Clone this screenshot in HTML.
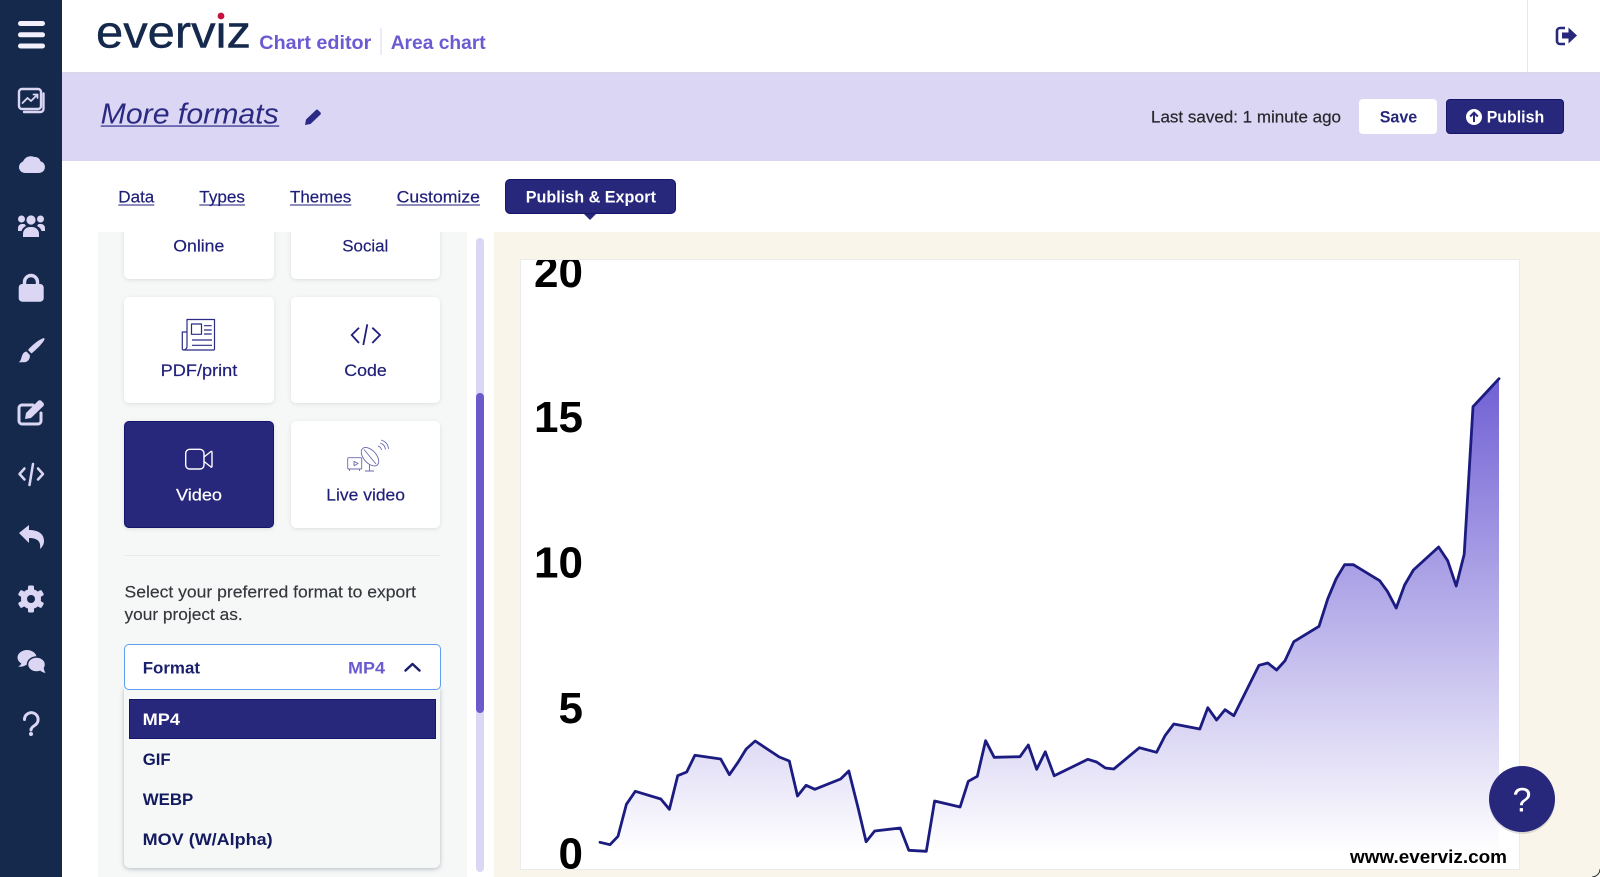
<!DOCTYPE html>
<html lang="en">
<head>
<meta charset="utf-8">
<title>everviz - Chart editor</title>
<style>
html,body{margin:0;padding:0;width:1600px;height:877px;overflow:hidden;background:#fff;font-family:"Liberation Sans",sans-serif}
.b{position:absolute;box-sizing:border-box}
svg.o{position:absolute;left:0;top:0}
text{font-family:"Liberation Sans",sans-serif}
.card{background:#fff;border-radius:5px;box-shadow:0 1px 4px rgba(40,50,70,.13)}
</style>
</head>
<body>
<div class="b" style="left:0;top:0;width:62px;height:877px;background:#15294c"></div>
<div class="b" style="left:62px;top:0;width:1538px;height:73px;background:#fff;border-bottom:1px solid #d9d6e8"></div>
<div class="b" style="left:1527px;top:0;width:1px;height:72px;background:#e6e6e6"></div>
<div class="b" style="left:62px;top:73px;width:1538px;height:88px;background:#dcd6f5"></div>
<div class="b" style="left:1359px;top:99px;width:78px;height:35px;background:#fff;border-radius:4px"></div>
<div class="b" style="left:1446px;top:99px;width:118px;height:35px;background:#27277b;border:1px solid #15156c;border-radius:4px"></div>
<div class="b" style="left:505px;top:179px;width:171px;height:35px;background:#27277b;border:1px solid #15156c;border-radius:5px"></div>
<div class="b" style="left:98px;top:232px;width:369px;height:645px;background:#f6f8f8"></div>
<div class="b card" style="left:124px;top:225px;width:149.500px;height:54px"></div>
<div class="b card" style="left:291px;top:225px;width:149px;height:54px"></div>
<div class="b" style="left:98px;top:161px;width:369px;height:71px;background:#fff"></div>
<div class="b card" style="left:124px;top:297px;width:149.500px;height:106px"></div>
<div class="b card" style="left:291px;top:297px;width:149px;height:106px"></div>
<div class="b card" style="left:124px;top:421px;width:149.500px;height:107px;background:#27277b;border:1px solid #15156c"></div>
<div class="b card" style="left:291px;top:421px;width:149px;height:107px"></div>
<div class="b" style="left:124px;top:555px;width:316px;height:1px;background:#e9ebeb"></div>
<div class="b" style="left:124px;top:688px;width:316px;height:180px;background:#f6f8f8;border-radius:0 0 6px 6px;box-shadow:0 1px 5px rgba(30,40,60,.3)"></div>
<div class="b" style="left:123.500px;top:644px;width:317px;height:46px;background:#fff;border:1.300px solid #5f9ff0;border-radius:5px"></div>
<div class="b" style="left:129px;top:699px;width:307px;height:40px;background:#27277b;border:1px solid #15156c"></div>
<div class="b" style="left:476px;top:238px;width:8px;height:634px;background:#dcd6f5;border-radius:4px"></div>
<div class="b" style="left:476px;top:393px;width:8px;height:320px;background:#6c5acd;border-radius:4px"></div>
<div class="b" style="left:494px;top:232px;width:1106px;height:645px;background:#f9f5ea"></div>
<div class="b" style="left:520px;top:259px;width:1000px;height:611px;background:#fff;border:1px solid #ebebeb"></div>

<svg class="o" width="1600" height="877" viewBox="0 0 1600 877" xmlns="http://www.w3.org/2000/svg">
<defs>
<linearGradient id="ag" gradientUnits="userSpaceOnUse" x1="0" y1="378" x2="0" y2="852">
<stop offset="0" stop-color="#7060d4"/><stop offset="1" stop-color="#fff"/>
</linearGradient>
<clipPath id="cc"><rect x="521" y="260" width="998" height="609"/></clipPath>
</defs>

<!-- sidebar icons -->
<g fill="#f2f0fc">
<rect x="18" y="21" width="27" height="5" rx="2.500"/><rect x="18" y="32.300" width="27" height="5" rx="2.500"/><rect x="18" y="43.500" width="27" height="5" rx="2.500"/>
</g>
<g fill="none" stroke="#dcd6f5" stroke-width="2.400" stroke-linecap="round" stroke-linejoin="round">
<rect x="19" y="89" width="22" height="20" rx="3"/>
<path d="M43.500 93.500V109a3 3 0 0 1-3 3H24"/>
<path d="M22.500 103l5-5 3.500 3 6-6M33.500 94.500H37.500V98" stroke-width="1.800"/>
</g>
<g fill="#dcd6f5">
<path d="M25 173h14a6 6 0 0 0 1.500-11.800A5.500 5.500 0 0 0 34.500 157 8.500 8.500 0 0 0 23 161.500 5.900 5.900 0 0 0 25 173z"/>
<circle cx="31" cy="220" r="4.600"/><circle cx="21.500" cy="219" r="3.500"/><circle cx="40.500" cy="219" r="3.500"/>
<path d="M23 237v-3a7 7 0 0 1 7-7h2a7 7 0 0 1 7 7v3z"/>
<path d="M18 231v-3a4 4 0 0 1 4-4h2.500l1.500 2a8 8 0 0 0-4.500 5zM45 231v-3a4 4 0 0 0-4-4h-2.500L37 226a8 8 0 0 1 4.500 5z"/>
<rect x="18.700" y="284" width="25" height="17.700" rx="3.500"/>
<path d="M44 338C40 339 33 344 28 350L31.500 353.500C37 349 43 343 44.700 339ZM26.500 351.500C22.500 352 22 356 21 359 20.500 361 19 362 18.700 362.300L24 362.300C28 362.300 30.500 358.500 29.800 355Z"/>
<path d="M25 419l1-6L38 401a2.500 2.500 0 0 1 3.500 0l1.700 1.700a2.500 2.500 0 0 1 0 3.500L31 418z"/>
<path d="M19 533L29 525v5c8 0 15 3 15 11 0 4-2 6-4 8 1-6-1-11-11-11v5z"/>
<g transform="translate(31 599)">
<circle r="10"/>
<rect x="-3" y="-13.500" width="6" height="27" rx="1.500"/>
<rect x="-3" y="-13.500" width="6" height="27" rx="1.500" transform="rotate(60)"/>
<rect x="-3" y="-13.500" width="6" height="27" rx="1.500" transform="rotate(120)"/>
<circle r="4" fill="#15294c"/>
</g>
<ellipse cx="27" cy="657.500" rx="9.500" ry="7.500"/>
<path d="M18 666.500c2-.5 3.500-2.500 4-5l4 3.500c-2 1.500-5 2-8 1.500z"/>
<ellipse cx="36.500" cy="664.500" rx="9" ry="7.500" stroke="#15294c" stroke-width="1.500"/>
<path d="M45.500 673c-2-.3-4.500-1.300-6-3l4-3.500c.3 2.500 1 5 2 6.500z"/>
<circle cx="31" cy="734" r="2"/>
</g>
<g fill="none" stroke="#dcd6f5" stroke-linecap="round" stroke-linejoin="round">
<path d="M33 405H22a3 3 0 0 0-3 3V421a3 3 0 0 0 3 3H38a3 3 0 0 0 3-3V413" stroke-width="3"/>
<path d="M24.500 284v-2a6.500 6.500 0 0 1 13 0V284" stroke-width="3.400"/>
<path d="M24.500 468.500L19.500 474l5 5.500M38 468.500l5 5.500-5 5.500M33 464L29.500 485" stroke-width="2.500"/>
<path d="M24.500 719.500a6.800 6.800 0 1 1 11 5.300c-3 2.200-4.500 3.200-4.500 5.200" stroke-width="3"/>
</g>

<!-- header -->
<text x="96" y="47.700" font-size="45" fill="#15294c" stroke="#15294c" stroke-width=".4" textLength="155" lengthAdjust="spacingAndGlyphs">everviz</text>
<circle cx="221" cy="16" r="3.400" fill="#c8103f"/>
<text x="259.300" y="49" font-size="19.500" font-weight="700" fill="#6b5bd2" textLength="112" lengthAdjust="spacingAndGlyphs">Chart editor</text>
<rect x="380.500" y="28" width="1" height="27" fill="#dcd6f5"/>
<text x="390.700" y="49" font-size="19.500" font-weight="700" fill="#6b5bd2" textLength="95" lengthAdjust="spacingAndGlyphs">Area chart</text>
<path d="M1565 28h-5a3 3 0 0 0-3 3v10a3 3 0 0 0 3 3h5" fill="none" stroke="#27277b" stroke-width="2.600"/>
<path d="M1562 32.500h6.500V27.500l8.500 8-8.500 8v-5H1562z" fill="#27277b"/>

<!-- title band -->
<text x="100.700" y="123.300" font-size="29" font-style="italic" fill="#2a2a82" textLength="178" lengthAdjust="spacingAndGlyphs">More formats</text>
<rect x="100.700" y="125.500" width="178.500" height="1.100" fill="#1c1c7c"/>
<path d="M305 125l1-5.500L316 110a1.500 1.500 0 0 1 2 0l2.500 2.500a1.500 1.500 0 0 1 0 2L310.500 124z" fill="#2b2b85"/>
<text x="1151" y="122.700" font-size="17" fill="#27272b" stroke="#27272b" stroke-width=".2" textLength="190" lengthAdjust="spacingAndGlyphs">Last saved: 1 minute ago</text>
<text x="1379.700" y="122.700" font-size="17" font-weight="700" fill="#27277b" textLength="37.500" lengthAdjust="spacingAndGlyphs">Save</text>
<circle cx="1474" cy="117" r="8" fill="#fff"/>
<path d="M1474 122v-9M1470.200 116.500l3.800-3.800 3.800 3.800" fill="none" stroke="#27277b" stroke-width="2"/>
<text x="1486.700" y="122.700" font-size="17" font-weight="700" fill="#fff" textLength="57.500" lengthAdjust="spacingAndGlyphs">Publish</text>

<!-- tabs -->
<g font-size="17" fill="#1f1f7a" stroke="#1f1f7a" stroke-width=".2">
<text x="118.300" y="202.700" textLength="36" lengthAdjust="spacingAndGlyphs">Data</text>
<text x="199.300" y="202.700" textLength="45.700" lengthAdjust="spacingAndGlyphs">Types</text>
<text x="290" y="202.700" textLength="61.300" lengthAdjust="spacingAndGlyphs">Themes</text>
<text x="396.700" y="202.700" textLength="83.300" lengthAdjust="spacingAndGlyphs">Customize</text>
</g>
<g fill="#1c1c7c">
<rect x="118.300" y="204.500" width="36" height="1"/><rect x="199.300" y="204.500" width="45.700" height="1"/><rect x="290" y="204.500" width="61.300" height="1"/><rect x="396.700" y="204.500" width="83.300" height="1"/>
<path d="M584 214h12l-6 6z" fill="#27277b"/>
</g>
<text x="525.700" y="202.700" font-size="17" font-weight="700" fill="#fff" textLength="130.300" lengthAdjust="spacingAndGlyphs">Publish &amp; Export</text>

<!-- cards -->
<g font-size="17" fill="#1f1f7a" stroke="#1f1f7a" stroke-width=".2">
<text x="173.300" y="251.700" textLength="51" lengthAdjust="spacingAndGlyphs">Online</text>
<text x="342.300" y="251.700" textLength="46" lengthAdjust="spacingAndGlyphs">Social</text>
<text x="160.700" y="376" textLength="76.600" lengthAdjust="spacingAndGlyphs">PDF/print</text>
<text x="344.300" y="376" textLength="42.400" lengthAdjust="spacingAndGlyphs">Code</text>
<text x="176" y="500.700" fill="#fff" stroke="#fff" textLength="46" lengthAdjust="spacingAndGlyphs">Video</text>
<text x="326.300" y="500.700" textLength="78.700" lengthAdjust="spacingAndGlyphs">Live video</text>
</g>
<g fill="none" stroke="#2b2b85" stroke-width="1.200" stroke-linejoin="round">
<path d="M187 350h26.500a1 1 0 0 0 1-1V319.500H187V346.500a3.500 3.500 0 0 1-3.500 3.500 1.500 1.500 0 0 1-1.200-1.500V332H187"/>
<path d="M183.500 350h4"/>
<rect x="191.500" y="324" width="10" height="10.300"/>
<path d="M204 325.700h7.700M204 330h7.700M204 334h7.700M192 340h20M192 345.300h20"/>
</g>
<path d="M359 327.700L351.700 335l7.300 8M372.300 327.700l7.700 7.300-7.700 8M367.300 324.300L363.300 345" fill="none" stroke="#1f1f7a" stroke-width="1.800"/>
<g fill="none" stroke="#fff" stroke-width="1.400" stroke-linejoin="round">
<rect x="185.700" y="449.300" width="18.300" height="19.700" rx="4"/>
<path d="M204 457l7-5.500q1-.5 1 1v13.500q0 1.500-1 1l-7-5.500"/>
</g>
<g fill="none" stroke="#6a6ab0" stroke-width=".9" stroke-linejoin="round">
<rect x="347.700" y="457.700" width="14" height="11.300" rx="1"/>
<path d="M349.500 469v2M359.500 469v2M354 461.300l4 2.200-4 2.200z"/>
<ellipse cx="370" cy="456.700" rx="11" ry="6.300" transform="rotate(48 370 456.700)"/>
<path d="M364 449.500L376 464M369.500 464v7M365 471h9M378 446q3 1 3.500 4M380 443q5 1.500 5.500 6.500M381 440q7 2 7.500 9"/>
</g>

<!-- format -->
<g font-size="16.500" fill="#33363a" stroke="#33363a" stroke-width=".15">
<text x="124.500" y="597.700" textLength="291.500" lengthAdjust="spacingAndGlyphs">Select your preferred format to export</text>
<text x="124.500" y="620" textLength="118.200" lengthAdjust="spacingAndGlyphs">your project as.</text>
</g>
<g font-size="17" font-weight="700">
<text x="142.700" y="673.300" fill="#1a1f6e" textLength="57.300" lengthAdjust="spacingAndGlyphs">Format</text>
<text x="348" y="673.300" fill="#6b5bd2" textLength="37" lengthAdjust="spacingAndGlyphs">MP4</text>
<text x="142.700" y="725" fill="#fff" textLength="37.300" lengthAdjust="spacingAndGlyphs">MP4</text>
<text x="142.700" y="765" fill="#131b5e" textLength="28" lengthAdjust="spacingAndGlyphs">GIF</text>
<text x="142.700" y="805" fill="#131b5e" textLength="50.600" lengthAdjust="spacingAndGlyphs">WEBP</text>
<text x="142.700" y="845" fill="#131b5e" textLength="130" lengthAdjust="spacingAndGlyphs">MOV (W/Alpha)</text>
</g>
<path d="M405.500 670.500l7-6.500 7 6.500" fill="none" stroke="#1a1f6e" stroke-width="2.500" stroke-linecap="round" stroke-linejoin="round"/>

<!-- chart -->
<g clip-path="url(#cc)">
<polygon fill="url(#ag)" points="600,852 600,842.300 610,844.700 618,836.300 626.400,804.300 635.300,791.300 660.800,799 669.400,809.300 677.700,775.700 686.700,772 694.900,755.300 720.700,759 729.400,774.700 738,762.300 746.200,749 755.200,741 779.300,757 789.300,761 797.500,796 806.100,785.300 814.800,789.300 840.600,779 848.800,771 857.800,806.700 866.100,841.700 874.700,831 900.200,828 908.800,850.300 926.300,851.300 934.600,801 960.100,807 968.300,781.300 977.300,776.300 985.600,740.700 994.200,757.300 1020,756.700 1028.300,745 1036.700,769.300 1045.300,751.800 1054.200,775.800 1087.900,759.300 1096.600,762 1105.400,768 1113.800,769 1139.400,747.700 1156.600,752.300 1165,735.700 1173.800,724 1199.800,729 1207.800,707.700 1216.600,720 1225,709.700 1233.800,715.700 1259,665.300 1267.800,663 1276.600,670 1285,660.700 1293.800,641.700 1319,626.300 1327.800,598.700 1336.200,578.700 1344.600,564.700 1353.400,564.700 1379.700,580.700 1387.400,591.300 1396.200,608 1404.600,585 1413.400,570 1438.600,547 1447.700,560.700 1456.200,586 1464.200,554.300 1473,406.700 1499,378.700 1499,852"/>
<polyline fill="none" stroke="#1b1b80" stroke-width="2.800" stroke-linejoin="round" stroke-linecap="round" points="600,842.300 610,844.700 618,836.300 626.400,804.300 635.300,791.300 660.800,799 669.400,809.300 677.700,775.700 686.700,772 694.900,755.300 720.700,759 729.400,774.700 738,762.300 746.200,749 755.200,741 779.300,757 789.300,761 797.500,796 806.100,785.300 814.800,789.300 840.600,779 848.800,771 857.800,806.700 866.100,841.700 874.700,831 900.200,828 908.800,850.300 926.300,851.300 934.600,801 960.100,807 968.300,781.300 977.300,776.300 985.600,740.700 994.200,757.300 1020,756.700 1028.300,745 1036.700,769.300 1045.300,751.800 1054.200,775.800 1087.900,759.300 1096.600,762 1105.400,768 1113.800,769 1139.400,747.700 1156.600,752.300 1165,735.700 1173.800,724 1199.800,729 1207.800,707.700 1216.600,720 1225,709.700 1233.800,715.700 1259,665.300 1267.800,663 1276.600,670 1285,660.700 1293.800,641.700 1319,626.300 1327.800,598.700 1336.200,578.700 1344.600,564.700 1353.400,564.700 1379.700,580.700 1387.400,591.300 1396.200,608 1404.600,585 1413.400,570 1438.600,547 1447.700,560.700 1456.200,586 1464.200,554.300 1473,406.700 1499,378.700"/>
<g font-size="44" font-weight="700" fill="#000" text-anchor="end">
<text x="583" y="287">20</text>
<text x="583" y="432">15</text>
<text x="583" y="577.500">10</text>
<text x="583" y="723">5</text>
<text x="583" y="868.500">0</text>
</g>
<text x="1350" y="863" font-size="18.500" font-weight="700" fill="#000" textLength="157" lengthAdjust="spacingAndGlyphs">www.everviz.com</text>
</g>

<!-- help button -->
<circle cx="1522" cy="801" r="33" fill="#000" opacity=".12"/>
<circle cx="1522" cy="799" r="33" fill="#27277b"/>
<text x="1522" y="811.500" font-size="34" fill="#fff" text-anchor="middle">?</text>

<!-- window corner -->
<path d="M1600 869v8h-8a8 8 0 0 0 8-8z" fill="#fff"/>
<path d="M1600 869a8 8 0 0 1-8 8" fill="none" stroke="#2a2a2a" stroke-width="1"/>
</svg>
</body>
</html>
